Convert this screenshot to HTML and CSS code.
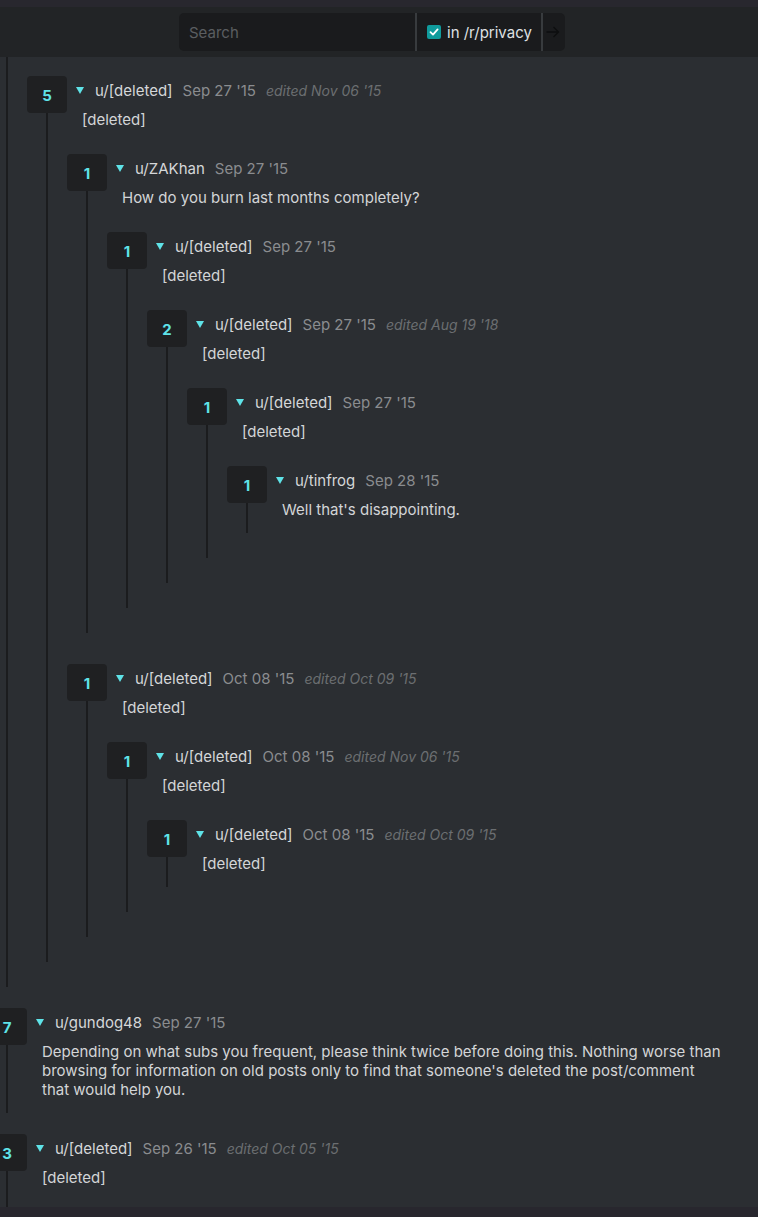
FILE: index.html
```html
<!DOCTYPE html>
<html lang="en">
  <head>
    <meta charset="UTF-8" />
    <meta name="viewport" content="width=device-width, initial-scale=1.0" />
    <title>r/privacy comments</title>
    <link rel="stylesheet" href="styles.css">
  </head>
  <body>
    <header class="topbar">
      <form class="search">
        <input class="search-input" type="text" placeholder="Search" />
        <label class="search-scope">
          <span class="check">
            <svg width="10" height="10" viewBox="0 0 10 10"><path d="M1.5 5.2 L4 7.6 L8.6 2.4" fill="none" stroke="#fff" stroke-width="1.8" stroke-linecap="round" stroke-linejoin="round"/></svg>
          </span>
          in /r/privacy
        </label>
        <button class="search-go" type="button">
          <svg width="14" height="12" viewBox="0 0 14 12"><path d="M0.5 6 H12.5 M7.5 1 L12.5 6 L7.5 11" fill="none" stroke="#0d0e0f" stroke-width="1.3"/></svg>
        </button>
      </form>
    </header>

    <main class="page">
      <div class="thread">

        <div class="comment tail">
          <div class="gutter">
            <div class="thread-line"></div>
          </div>
          <div class="main">
            <div class="replies">

              <div class="comment">
                <div class="gutter"><div class="score">5</div><div class="thread-line"></div></div>
                <div class="main">
                  <div class="meta"><span class="toggle"></span><span class="author">u/[deleted]</span><span class="date">Sep 27 '15</span><span class="edited">edited Nov 06 '15</span></div>
                  <p class="body">[deleted]</p>
                  <div class="replies">

                    <div class="comment">
                      <div class="gutter"><div class="score">1</div><div class="thread-line"></div></div>
                      <div class="main">
                        <div class="meta"><span class="toggle"></span><span class="author">u/ZAKhan</span><span class="date">Sep 27 '15</span></div>
                        <p class="body">How do you burn last months completely?</p>
                        <div class="replies">

                          <div class="comment">
                            <div class="gutter"><div class="score">1</div><div class="thread-line"></div></div>
                            <div class="main">
                              <div class="meta"><span class="toggle"></span><span class="author">u/[deleted]</span><span class="date">Sep 27 '15</span></div>
                              <p class="body">[deleted]</p>
                              <div class="replies">

                                <div class="comment">
                                  <div class="gutter"><div class="score">2</div><div class="thread-line"></div></div>
                                  <div class="main">
                                    <div class="meta"><span class="toggle"></span><span class="author">u/[deleted]</span><span class="date">Sep 27 '15</span><span class="edited">edited Aug 19 '18</span></div>
                                    <p class="body">[deleted]</p>
                                    <div class="replies">

                                      <div class="comment">
                                        <div class="gutter"><div class="score">1</div><div class="thread-line"></div></div>
                                        <div class="main">
                                          <div class="meta"><span class="toggle"></span><span class="author">u/[deleted]</span><span class="date">Sep 27 '15</span></div>
                                          <p class="body">[deleted]</p>
                                          <div class="replies">

                                            <div class="comment">
                                              <div class="gutter"><div class="score">1</div><div class="thread-line"></div></div>
                                              <div class="main">
                                                <div class="meta"><span class="toggle"></span><span class="author">u/tinfrog</span><span class="date">Sep 28 '15</span></div>
                                                <p class="body">Well that's disappointing.</p>
                                              </div>
                                            </div>

                                          </div>
                                        </div>
                                      </div>

                                    </div>
                                  </div>
                                </div>

                              </div>
                            </div>
                          </div>

                        </div>
                      </div>
                    </div>

                    <div class="comment">
                      <div class="gutter"><div class="score">1</div><div class="thread-line"></div></div>
                      <div class="main">
                        <div class="meta"><span class="toggle"></span><span class="author">u/[deleted]</span><span class="date">Oct 08 '15</span><span class="edited">edited Oct 09 '15</span></div>
                        <p class="body">[deleted]</p>
                        <div class="replies">

                          <div class="comment">
                            <div class="gutter"><div class="score">1</div><div class="thread-line"></div></div>
                            <div class="main">
                              <div class="meta"><span class="toggle"></span><span class="author">u/[deleted]</span><span class="date">Oct 08 '15</span><span class="edited">edited Nov 06 '15</span></div>
                              <p class="body">[deleted]</p>
                              <div class="replies">

                                <div class="comment">
                                  <div class="gutter"><div class="score">1</div><div class="thread-line"></div></div>
                                  <div class="main">
                                    <div class="meta"><span class="toggle"></span><span class="author">u/[deleted]</span><span class="date">Oct 08 '15</span><span class="edited">edited Oct 09 '15</span></div>
                                    <p class="body">[deleted]</p>
                                  </div>
                                </div>

                              </div>
                            </div>
                          </div>

                        </div>
                      </div>
                    </div>

                  </div>
                </div>
              </div>

            </div>
          </div>
        </div>

        <div class="comment top">
          <div class="gutter"><div class="score">7</div><div class="thread-line"></div></div>
          <div class="main">
            <div class="meta"><span class="toggle"></span><span class="author">u/gundog48</span><span class="date">Sep 27 '15</span></div>
            <p class="body">Depending on what subs you frequent, please think twice before doing this. Nothing worse than browsing for information on old posts only to find that someone's deleted the post/comment that would help you.</p>
          </div>
        </div>

        <div class="comment top more">
          <div class="gutter"><div class="score">3</div><div class="thread-line"></div></div>
          <div class="main">
            <div class="meta"><span class="toggle"></span><span class="author">u/[deleted]</span><span class="date">Sep 26 '15</span><span class="edited">edited Oct 05 '15</span></div>
            <p class="body">[deleted]</p>
          </div>
        </div>

      </div>
    </main>
  </body>
</html>
```

FILE: styles.css
```css
body {
  margin: 0;
  padding-top: 7px;
  background: #28272e;
  font-family: Inter, "Noto Sans", sans-serif;
  font-size: 15px;
  color: #d3d5d7;
}
.topbar {
  height: 50px;
  background: #222426;
  display: flex;
  align-items: center;
  padding-left: 179px;
}
.search {
  display: flex;
  height: 38px;
  width: 386px;
  background: #1a1b1d;
  border-radius: 5px;
  overflow: hidden;
  margin: 0;
}
.search-input {
  width: 238px;
  box-sizing: border-box;
  border: none;
  border-right: 2px solid #383b3e;
  background: transparent;
  padding: 0 10px;
  font-family: inherit;
  font-size: 15px;
  color: #d3d5d7;
  outline: none;
}
.search-input::placeholder {
  color: #5b5e61;
}
.search-scope {
  display: flex;
  align-items: center;
  gap: 6px;
  width: 126px;
  box-sizing: border-box;
  padding-left: 10px;
  border-right: 2px solid #383b3e;
  color: #dfe1e3;
  font-size: 15px;
}
.check {
  width: 14px;
  height: 14px;
  border-radius: 2px;
  background: #109b9c;
  display: flex;
  align-items: center;
  justify-content: center;
}
.search-go {
  flex: 1;
  border: none;
  background: transparent;
  padding: 0 0 0 3px;
  display: flex;
  align-items: center;
  justify-content: flex-start;
}
.page {
  height: 1150px;
  overflow: hidden;
  background: #2b2e32;
}
.thread {
  margin-left: -13px;
}
.comment {
  display: grid;
  grid-template-columns: 40px 1fr;
}
.replies > .comment {
  margin-top: 25px;
}
.comment.top {
  margin-top: 15px;
}
.gutter {
  display: flex;
  flex-direction: column;
  align-items: center;
}
.score {
  width: 40px;
  height: 37px;
  border-radius: 4px;
  background: #1f2022;
  color: #5fe3e8;
  font-weight: 700;
  font-size: 15px;
  display: flex;
  align-items: center;
  justify-content: center;
  padding-top: 1px;
  box-sizing: border-box;
}
.thread-line {
  flex: 1;
  width: 2px;
  background: #1b1c1e;
  margin-bottom: 6px;
}
.main {
  padding-bottom: 20px;
  padding-right: 35px;
}
.more .main {
  padding-bottom: 40px;
}
.meta {
  height: 28px;
  display: flex;
  align-items: center;
  gap: 10px;
  padding-left: 9px;
  white-space: nowrap;
}
.toggle {
  width: 0;
  height: 0;
  border-left: 4px solid transparent;
  border-right: 4px solid transparent;
  border-top: 7px solid #5fe3e8;
  margin-right: 1px;
}
.author {
  color: #d5d7d9;
}
.date {
  color: #8a8c8f;
}
.edited {
  color: #6b6e71;
  font-style: italic;
  font-size: 14px;
}
.body {
  margin: 6px 0 0;
  padding-left: 15px;
  line-height: 19px;
  color: #d3d5d7;
}
.replies {
  padding-bottom: 5px;
}
.tail > .main > .replies {
  margin-top: -6px;
}
```
